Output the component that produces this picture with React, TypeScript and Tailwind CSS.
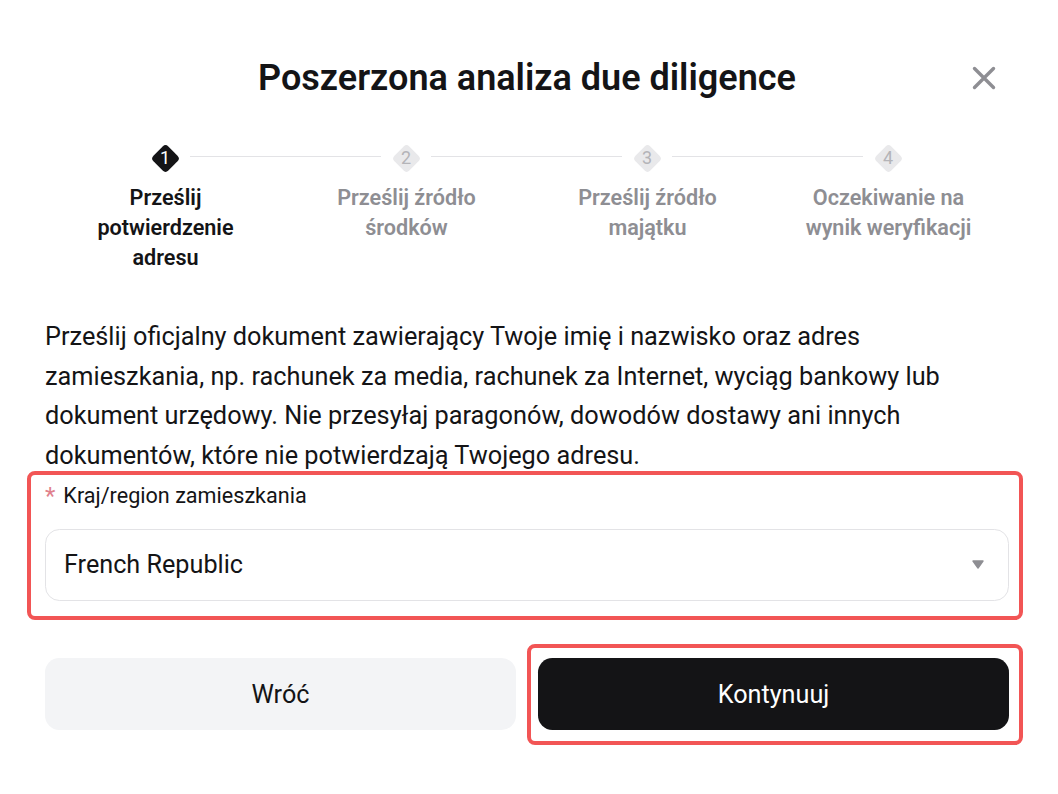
const steps = [
  { num: 1, label: ['Prześlij', 'potwierdzenie', 'adresu'] },
  { num: 2, label: ['Prześlij źródło', 'środków'] },
  { num: 3, label: ['Prześlij źródło', 'majątku'] },
  { num: 4, label: ['Oczekiwanie na', 'wynik weryfikacji'] },
];

const Step = ({ num, label }: { num: number; label: string[] }) => {
  const active = num === 1;
  return (
    <div className="relative flex flex-col items-center">
      {num < 4 && (
        <div className="absolute left-[145px] top-[13px] h-px w-[191px] bg-[#e3e3e6]" />
      )}
      <div className="relative left-[-0.5px] top-[1px] flex h-[28px] w-[28px] items-center justify-center">
        <div className={`absolute left-[3.5px] top-[3.5px] h-[21px] w-[21px] rotate-45 rounded-[4px] ${active ? 'bg-[#141416]' : 'bg-[#e9e9eb]'}`} />
        <span className={`relative text-[18px] leading-none ${active ? 'text-white' : 'text-[#b4b4b8]'}`}>{num}</span>
      </div>
      <div className={`mt-[12px] text-center text-[21.6px] font-semibold leading-[30px] ${active ? 'text-[#141416]' : 'text-[#8e8e93]'}`}>
        {label.map((line) => (
          <div key={line}>{line}</div>
        ))}
      </div>
    </div>
  );
};

export default function App() {
  return (
    <div className="h-[794px] w-[1058px] overflow-hidden bg-white pl-[45px] pr-[49px] font-['Roboto',sans-serif] text-[#141416]">
      <div className="relative flex h-[143px] items-start justify-center pt-[55px]">
        <h1 className="text-[36px] font-semibold leading-[46px]">Poszerzona analiza due diligence</h1>
        <svg className="absolute right-[13px] top-[66px]" width="24" height="24" viewBox="0 0 24 24" fill="none">
          <path d="M2.5 2.5L21.5 21.5M21.5 2.5L2.5 21.5" stroke="#8e8e93" strokeWidth="3.4" strokeLinecap="round" />
        </svg>
      </div>
      <div className="grid grid-cols-4">
        {steps.map((s) => (
          <Step key={s.num} num={s.num} label={s.label} />
        ))}
      </div>
      <p className="mt-[44px] text-[25.3px] leading-[39.5px]">
        Prześlij oficjalny dokument zawierający Twoje imię i nazwisko oraz adres
        <br />
        zamieszkania, np. rachunek za media, rachunek za Internet, wyciąg bankowy lub
        <br />
        dokument urzędowy. Nie przesyłaj paragonów, dowodów dostawy ani innych
        <br />
        dokumentów, które nie potwierdzają Twojego adresu.
      </p>
      <div className="relative">
        <div className="absolute left-[-18px] right-[-14px] top-[-4px] h-[149px] rounded-[8px] border-4 border-[#f25555]" />
        <label className="flex h-[42px] items-center text-[21.6px]">
          <span className="mr-[8px] text-[24px] leading-none text-[#e0808c]">*</span>
          Kraj/region zamieszkania
        </label>
        <div className="mt-[12px] flex h-[72px] items-center justify-between rounded-[14.4px] border border-[#e3e3e6] pl-[18px] pr-[24px] text-[25.2px]">
          <span>French Republic</span>
          <svg width="12" height="10" viewBox="0 0 12 10">
            <path d="M1 1H11L6 8Z" fill="#8e8e93" stroke="#8e8e93" strokeWidth="1.4" strokeLinejoin="round" />
          </svg>
        </div>
      </div>
      <div className="mt-[57px] grid grid-cols-2 gap-[22px]">
        <button className="h-[72px] rounded-[14.4px] bg-[#f3f4f6] pt-[2px] text-[25.2px] font-[450]">Wróć</button>
        <div className="relative">
          <div className="absolute left-[-11px] right-[-14px] top-[-14px] h-[101px] rounded-[8px] border-4 border-[#f25555]" />
          <button className="h-[72px] w-full rounded-[14.4px] bg-[#141416] pt-[2px] text-[25.2px] font-[450] text-white">Kontynuuj</button>
        </div>
      </div>
    </div>
  );
}
